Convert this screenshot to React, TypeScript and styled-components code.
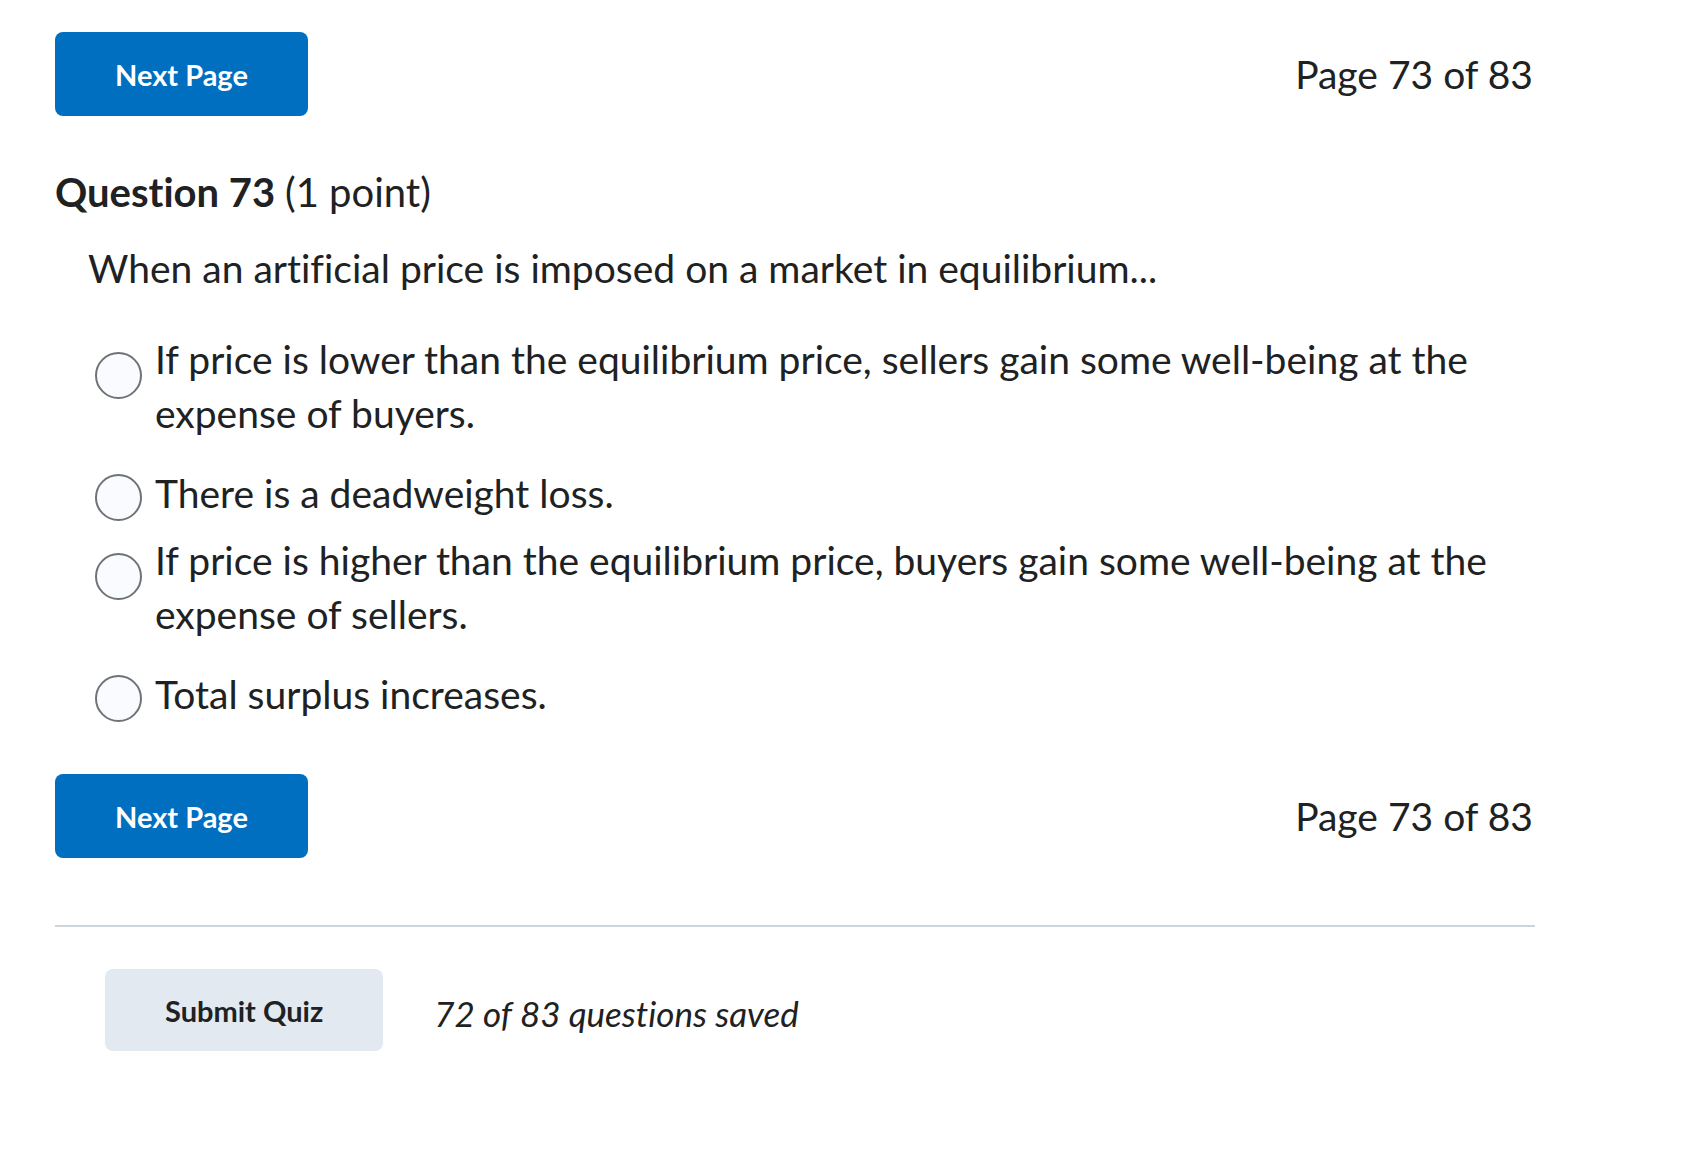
import React from "react";
import styled, { createGlobalStyle } from "styled-components";

const GlobalStyle = createGlobalStyle`
  html, body {
    margin: 0;
    padding: 0;
    background: #ffffff;
  }
  body {
    font-family: Lato, "Open Sans", "Liberation Sans", sans-serif;
    font-variant-ligatures: none;
    color: #202122;
  }
  * { box-sizing: border-box; }
`;

const Page = styled.main`
  width: 1535px;
  padding: 32px 0 60px 55px;
`;

const NavBar = styled.div`
  display: flex;
  align-items: center;
  justify-content: space-between;
  height: 84px;
`;

const PrimaryButton = styled.button`
  height: 84px;
  padding: 0 60px;
  border: none;
  border-radius: 8px;
  background: #006fbf;
  color: #ffffff;
  font-family: Lato, sans-serif;
  font-variant-ligatures: none;
  font-weight: 700;
  font-size: 29px;
  cursor: pointer;
`;

const PageCount = styled.span`
  font-size: 39px;
  color: #202122;
  padding-right: 2px;
`;

const Heading = styled.h2`
  margin: 52px 0 0 0;
  font-size: 40px;
  line-height: 48px;
  font-weight: 700;
  color: #202122;
`;

const Points = styled.span`
  font-weight: 400;
`;

const QuestionText = styled.p`
  margin: 25px 0 0 0;
  padding-left: 33px;
  font-size: 39px;
  line-height: 54px;
`;

const Options = styled.ul`
  list-style: none;
  margin: 37px 0 0 0;
  padding: 0 0 0 40px;
  display: flex;
  flex-direction: column;
  gap: 12px;
`;

const Option = styled.li<{ $wrap?: boolean }>`
  display: flex;
  align-items: flex-start;
  gap: 13px;
  padding-bottom: ${(p) => (p.$wrap ? "14px" : "0")};
`;

const Radio = styled.span<{ $wrap?: boolean }>`
  flex: none;
  width: 47px;
  height: 47px;
  margin-top: ${(p) => (p.$wrap ? "20px" : "8px")};
  border-radius: 50%;
  border: 2px solid #6e7376;
  background: #f9fbff;
`;

const OptionText = styled.span`
  font-size: 39px;
  line-height: 54px;
  color: #202122;
`;

const BottomNav = styled(NavBar)`
  margin-top: 52px;
`;

const Divider = styled.hr`
  margin: 67px 0 0 0;
  border: none;
  height: 2px;
  background: #cdd5dc;
`;

const Footer = styled.div`
  display: flex;
  align-items: center;
  gap: 51px;
  margin-top: 42px;
  padding-left: 50px;
`;

const SecondaryButton = styled.button`
  height: 82px;
  padding: 0 60px;
  border: none;
  border-radius: 8px;
  background: #e3e9f1;
  color: #202122;
  font-family: Lato, sans-serif;
  font-weight: 700;
  font-size: 29px;
  cursor: pointer;
`;

const SavedNote = styled.span`
  font-style: italic;
  font-size: 35px;
  padding-top: 5px;
  color: #202122;
`;

const options = [
  {
    text: "If price is lower than the equilibrium price, sellers gain some well-being at the expense of buyers.",
    wrap: true,
  },
  { text: "There is a deadweight loss.", wrap: false },
  {
    text: "If price is higher than the equilibrium price, buyers gain some well-being at the expense of sellers.",
    wrap: true,
  },
  { text: "Total surplus increases.", wrap: false },
];

export default function App() {
  return (
    <>
      <GlobalStyle />
      <Page>
        <NavBar>
          <PrimaryButton>Next Page</PrimaryButton>
          <PageCount>Page 73 of 83</PageCount>
        </NavBar>
        <Heading>
          Question 73 <Points>(1 point)</Points>
        </Heading>
        <QuestionText>When an artificial price is imposed on a market in equilibrium...</QuestionText>
        <Options>
          {options.map((o) => (
            <Option key={o.text} $wrap={o.wrap}>
              <Radio $wrap={o.wrap} />
              <OptionText>{o.text}</OptionText>
            </Option>
          ))}
        </Options>
        <BottomNav>
          <PrimaryButton>Next Page</PrimaryButton>
          <PageCount>Page 73 of 83</PageCount>
        </BottomNav>
        <Divider />
        <Footer>
          <SecondaryButton>Submit Quiz</SecondaryButton>
          <SavedNote>72 of 83 questions saved</SavedNote>
        </Footer>
      </Page>
    </>
  );
}
